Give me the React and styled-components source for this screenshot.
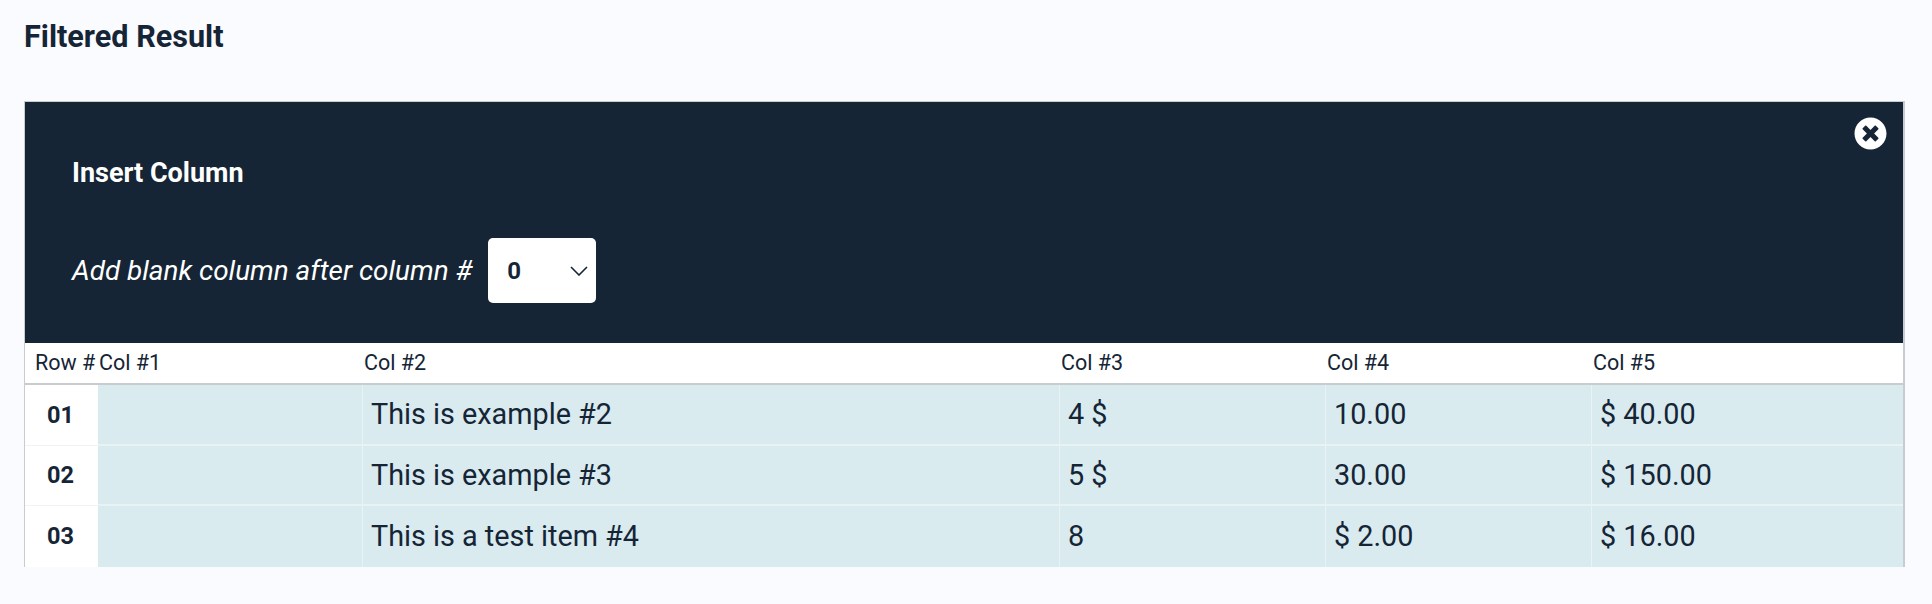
import React from 'react';
import styled, { createGlobalStyle } from 'styled-components';
import { FaTimesCircle } from 'react-icons/fa';

const GlobalStyle = createGlobalStyle`
  html, body {
    margin: 0;
    padding: 0;
    background: #fafbff;
  }
  body {
    font-family: Roboto, "Liberation Sans", sans-serif;
    color: #152536;
    -webkit-font-smoothing: antialiased;
  }
`;

const Page = styled.div`
  padding: 19px 27px 38px 24px;
  height: 604px;
  box-sizing: border-box;
`;

const Title = styled.h2`
  margin: 0 0 46px;
  font-size: 30.6px;
  line-height: 36px;
  font-weight: 700;
`;

const Frame = styled.div`
  border: solid #c9cccf;
  border-width: 1px 2px 0 1px;
`;

const InsertPanel = styled.div`
  position: relative;
  background: #152536;
  color: #fff;
  height: 241px;
  padding: 56px 47px 0;
  box-sizing: border-box;
`;

const PanelTitle = styled.h3`
  margin: 0 0 49px;
  font-size: 27px;
  line-height: 31px;
  font-weight: 700;
`;

const CloseButton = styled.button`
  position: absolute;
  top: 15px;
  right: 16px;
  display: flex;
  padding: 0;
  border: 0;
  background: none;
  color: #fff;
  font-size: 33px;
`;

const InsertRow = styled.div`
  display: flex;
  align-items: center;
  gap: 16px;
`;

const InsertLabel = styled.span`
  font-size: 27.9px;
  font-style: italic;
  font-weight: 400;
`;

const SelectBox = styled.div`
  width: 108px;
  height: 65px;
  box-sizing: border-box;
  padding: 0 8px 0 19px;
  display: flex;
  align-items: center;
  justify-content: space-between;
  background: #fff;
  border-radius: 5px;
  color: #152536;
  font-size: 24px;
  font-weight: 700;
`;

const Grid = styled.div`
  display: grid;
  grid-template-columns: 73px 265px 697px 266px 266px 1fr;
`;

const HeadCell = styled.div`
  height: 40px;
  padding-left: ${p => p.$first ? '10px' : '1px'};
  background: #fff;
  border-bottom: 2px solid #c9cccf;
  font-size: 21.5px;
  font-weight: 400;
  line-height: 39px;
  white-space: nowrap;
`;

const RowNumber = styled.div`
  height: 60.5px;
  box-sizing: border-box;
  display: flex;
  align-items: center;
  padding-left: 22px;
  background: #fff;
  border-bottom: ${p => p.$last ? '0' : '1px solid #eef3f4'};
  font-size: 23.5px;
  font-weight: 700;
`;

const Cell = styled.div`
  height: 60.5px;
  box-sizing: border-box;
  display: flex;
  align-items: center;
  padding-left: 8px;
  margin-left: ${p => p.$plain ? '0' : '-1px'};
  background: #d9ebef;
  border-bottom: ${p => p.$last ? '0' : '2px solid #e9f3f5'};
  border-left: ${p => p.$plain ? '0' : '1px solid #e9f3f5'};
  font-size: 28.8px;
  font-weight: 400;
  white-space: nowrap;
`;

const columns = ['Col #1', 'Col #2', 'Col #3', 'Col #4', 'Col #5'];

const rows = [
  ['01', '', 'This is example #2', '4 $', '10.00', '$ 40.00'],
  ['02', '', 'This is example #3', '5 $', '30.00', '$ 150.00'],
  ['03', '', 'This is a test item #4', '8', '$ 2.00', '$ 16.00'],
];

const App = () => {
  return (
    <>
      <GlobalStyle />
      <Page>
        <Title>Filtered Result</Title>
        <Frame>
          <InsertPanel>
            <CloseButton aria-label="Close"><FaTimesCircle /></CloseButton>
            <PanelTitle>Insert Column</PanelTitle>
            <InsertRow>
              <InsertLabel>Add blank column after column #</InsertLabel>
              <SelectBox>
                0
                <svg width="18" height="10" viewBox="0 0 18 10" fill="none" stroke="#152536" strokeWidth="1.6">
                  <path d="M1 1l8 8 8-8" />
                </svg>
              </SelectBox>
            </InsertRow>
          </InsertPanel>
          <Grid>
            <HeadCell $first>Row #</HeadCell>
            {columns.map(c => <HeadCell key={c}>{c}</HeadCell>)}
            {rows.map((r, i) => {
              const last = i === rows.length - 1;
              return (
                <React.Fragment key={r[0]}>
                  <RowNumber $last={last}>{r[0]}</RowNumber>
                  {r.slice(1).map((v, j) => (
                    <Cell key={j} $last={last} $plain={j === 0}>{v}</Cell>
                  ))}
                </React.Fragment>
              );
            })}
          </Grid>
        </Frame>
      </Page>
    </>
  );
};

export default App;
